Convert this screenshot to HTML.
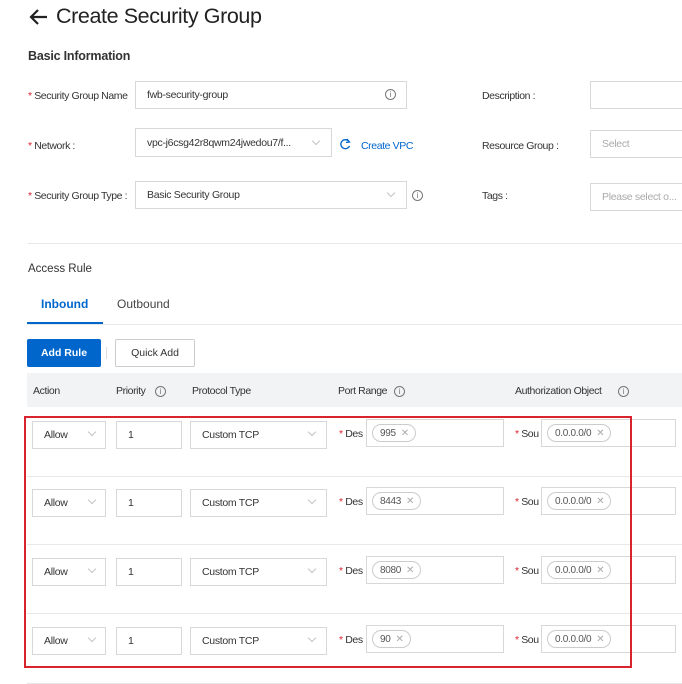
<!DOCTYPE html><html><head><meta charset="utf-8"><style>
*{box-sizing:border-box;margin:0;padding:0}
body{width:682px;height:684px;overflow:hidden;background:#fff;font-family:"Liberation Sans",sans-serif;color:#333;position:relative;font-size:11px}
.a{position:absolute}
.lbl{position:absolute;font-size:10.5px;color:#333;transform:translateY(-50%);white-space:nowrap;letter-spacing:-0.4px}
.req{color:#d9232d}
.in{position:absolute;border:1px solid #d8d8d8;background:#fff;font-size:10.5px;display:flex;align-items:center;padding-left:11px;color:#333;white-space:nowrap;overflow:hidden;letter-spacing:-0.3px}
.chev{position:absolute;width:6px;height:6px;border-right:1px solid #c4c4c4;border-bottom:1px solid #c4c4c4;transform:rotate(45deg)}
.info{position:absolute;width:11px;height:11px;border:1px solid #777;border-radius:50%;font-size:8px;line-height:9px;text-align:center;color:#777}
.tag{display:inline-flex;align-items:center;border:1px solid #ccc;border-radius:10px;height:18px;padding:0 6px 0 7px;font-size:10px;color:#555;margin-left:-6px;letter-spacing:-0.3px}
.tag span{margin-left:5px;color:#aaa;font-size:10px}
.line{position:absolute;height:1px;background:#e8e8e8}
</style></head><body>
<svg class="a" style="left:28px;top:8px" width="20" height="18"><path d="M19 9H3M10 2L3 9l7 7" stroke="#222" stroke-width="2.2" fill="none"/></svg>
<div class="a" style="left:56px;top:4px;font-size:21.5px;color:#222;letter-spacing:-0.4px">Create Security Group</div>
<div class="a" style="left:28px;top:49px;font-size:12.5px;color:#333;letter-spacing:-0.2px;font-weight:600">Basic Information</div>

<div class="lbl" style="left:28px;top:96px"><span class="req">*</span> Security Group Name</div>
<div class="in" style="left:135px;top:81px;width:272px;height:28px">fwb-security-group</div>
<div class="info" style="left:385px;top:89px">i</div>
<div class="lbl" style="left:482px;top:96px">Description :</div>
<div class="in" style="left:590px;top:81px;width:100px;height:28px"></div>

<div class="lbl" style="left:28px;top:146px"><span class="req">*</span> Network :</div>
<div class="in" style="left:135px;top:128px;width:197px;height:29px">vpc-j6csg42r8qwm24jwedou7/f...</div>
<div class="chev" style="left:313px;top:138px"></div>
<svg class="a" style="left:339px;top:138px" width="12" height="12"><path d="M10 3.5A4.5 4.5 0 1 0 10.5 8" stroke="#0066cc" stroke-width="1.3" fill="none"/><path d="M8 1l2.5 3L7 4.5" stroke="#0066cc" stroke-width="1.2" fill="none"/></svg>
<div class="lbl" style="left:361px;top:146px;color:#0066cc">Create VPC</div>
<div class="lbl" style="left:482px;top:146px">Resource Group :</div>
<div class="in" style="left:590px;top:130px;width:100px;height:28px;color:#aaa">Select</div>

<div class="lbl" style="left:28px;top:196px"><span class="req">*</span> Security Group Type :</div>
<div class="in" style="left:135px;top:181px;width:272px;height:28px">Basic Security Group</div>
<div class="chev" style="left:388px;top:190px"></div>
<div class="info" style="left:412px;top:190px">i</div>
<div class="lbl" style="left:482px;top:196px">Tags :</div>
<div class="in" style="left:590px;top:183px;width:100px;height:28px;color:#aaa">Please select o...</div>

<div class="line" style="left:28px;top:243px;width:654px"></div>
<div class="a" style="left:28px;top:263px;font-size:11.5px;color:#333">Access Rule</div>
<div class="a" style="left:41px;top:297px;font-size:12px;color:#0066cc;font-weight:bold">Inbound</div>
<div class="a" style="left:117px;top:297px;font-size:12px;color:#444">Outbound</div>
<div class="line" style="left:27px;top:324px;width:655px"></div>
<div class="a" style="left:27px;top:322px;width:76px;height:2px;background:#0066cc"></div>
<div class="a" style="left:27px;top:339px;width:74px;height:28px;background:#0066cc;border-radius:2px;color:#fff;font-size:10.5px;font-weight:bold;display:flex;align-items:center;justify-content:center">Add Rule</div>
<div class="a" style="left:106px;top:347px;width:1px;height:12px;background:#ddd"></div>
<div class="a" style="left:115px;top:339px;width:80px;height:28px;border:1px solid #ccc;border-radius:2px;font-size:10.5px;display:flex;align-items:center;justify-content:center;color:#333">Quick Add</div>

<div class="a" style="left:27px;top:373px;width:655px;height:34px;background:#f2f3f5"></div>
<div class="lbl" style="left:33px;top:391px">Action</div>
<div class="lbl" style="left:116px;top:391px">Priority</div><div class="info" style="left:155px;top:386px">i</div>
<div class="lbl" style="left:192px;top:391px">Protocol Type</div>
<div class="lbl" style="left:338px;top:391px">Port Range</div><div class="info" style="left:394px;top:386px">i</div>
<div class="lbl" style="left:515px;top:391px">Authorization Object</div><div class="info" style="left:618px;top:386px">i</div>

<div class="line" style="left:27px;top:544px;width:655px"></div>
<div class="line" style="left:27px;top:476px;width:655px"></div>
<div class="line" style="left:27px;top:613px;width:655px"></div>
<div class="line" style="left:27px;top:683px;width:655px"></div>

<div class="a" style="left:0;top:420px;width:682px;height:30px">
<div class="in" style="left:32px;top:1px;width:74px;height:28px">Allow</div><div class="chev" style="left:89px;top:9px"></div>
<div class="in" style="left:116px;top:1px;width:66px;height:28px">1</div>
<div class="in" style="left:190px;top:1px;width:137px;height:28px">Custom TCP</div><div class="chev" style="left:309px;top:9px"></div>
<div class="lbl" style="left:339px;top:14px"><span class="req">*</span> Des</div>
<div class="in" style="left:366px;top:-1px;width:138px;height:28px"><span class="tag">995<span>✕</span></span></div>
<div class="lbl" style="left:515px;top:14px"><span class="req">*</span> Sou</div>
<div class="in" style="left:541px;top:-1px;width:135px;height:28px"><span class="tag">0.0.0.0/0<span>✕</span></span></div>
</div>
<div class="a" style="left:0;top:488px;width:682px;height:30px">
<div class="in" style="left:32px;top:1px;width:74px;height:28px">Allow</div><div class="chev" style="left:89px;top:9px"></div>
<div class="in" style="left:116px;top:1px;width:66px;height:28px">1</div>
<div class="in" style="left:190px;top:1px;width:137px;height:28px">Custom TCP</div><div class="chev" style="left:309px;top:9px"></div>
<div class="lbl" style="left:339px;top:14px"><span class="req">*</span> Des</div>
<div class="in" style="left:366px;top:-1px;width:138px;height:28px"><span class="tag">8443<span>✕</span></span></div>
<div class="lbl" style="left:515px;top:14px"><span class="req">*</span> Sou</div>
<div class="in" style="left:541px;top:-1px;width:135px;height:28px"><span class="tag">0.0.0.0/0<span>✕</span></span></div>
</div>
<div class="a" style="left:0;top:557px;width:682px;height:30px">
<div class="in" style="left:32px;top:1px;width:74px;height:28px">Allow</div><div class="chev" style="left:89px;top:9px"></div>
<div class="in" style="left:116px;top:1px;width:66px;height:28px">1</div>
<div class="in" style="left:190px;top:1px;width:137px;height:28px">Custom TCP</div><div class="chev" style="left:309px;top:9px"></div>
<div class="lbl" style="left:339px;top:14px"><span class="req">*</span> Des</div>
<div class="in" style="left:366px;top:-1px;width:138px;height:28px"><span class="tag">8080<span>✕</span></span></div>
<div class="lbl" style="left:515px;top:14px"><span class="req">*</span> Sou</div>
<div class="in" style="left:541px;top:-1px;width:135px;height:28px"><span class="tag">0.0.0.0/0<span>✕</span></span></div>
</div>
<div class="a" style="left:0;top:626px;width:682px;height:30px">
<div class="in" style="left:32px;top:1px;width:74px;height:28px">Allow</div><div class="chev" style="left:89px;top:9px"></div>
<div class="in" style="left:116px;top:1px;width:66px;height:28px">1</div>
<div class="in" style="left:190px;top:1px;width:137px;height:28px">Custom TCP</div><div class="chev" style="left:309px;top:9px"></div>
<div class="lbl" style="left:339px;top:14px"><span class="req">*</span> Des</div>
<div class="in" style="left:366px;top:-1px;width:138px;height:28px"><span class="tag">90<span>✕</span></span></div>
<div class="lbl" style="left:515px;top:14px"><span class="req">*</span> Sou</div>
<div class="in" style="left:541px;top:-1px;width:135px;height:28px"><span class="tag">0.0.0.0/0<span>✕</span></span></div>
</div>

<div class="a" style="left:24px;top:416px;width:608px;height:252px;border:2px solid #d9232d"></div>
</body></html>
